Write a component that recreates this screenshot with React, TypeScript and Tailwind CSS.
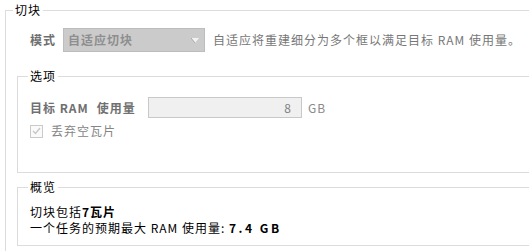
export default function App() {
  return (
    <div className="w-[529px] h-[251px] overflow-hidden bg-white pt-[2px] text-[12px] leading-[16px] tracking-[1px] font-['Noto_Sans_CJK_SC',sans-serif] text-black">
      <fieldset className="ml-[5px] w-[620px] border border-[#dcdcdc] p-0 pb-[40px]">
        <legend className="ml-[7px] px-[2px]">切块</legend>

        {/* mode row */}
        <div className="flex items-center pt-[10px] pl-[24px]">
          <span className="font-bold text-[#6f6f6f]">模式</span>
          <div className="ml-[7px] flex h-[24px] w-[142px] items-center justify-between border border-[#bdbdbd] bg-[#cbcbcb] pl-[4px] pr-[5px]">
            <span className="font-bold text-[#8e8e8e]">自适应切块</span>
            <svg width="8" height="5" viewBox="0 0 8 5">
              <path d="M0 0 L8 0 L4 5 Z" fill="#f2f2f2" />
              <path d="M0 0 L4 5" stroke="#a8a8a8" strokeWidth="1" />
            </svg>
          </div>
          <span className="ml-[8px] text-[#777777]">自适应将重建细分为多个框以满足目标 RAM 使用量。</span>
        </div>

        {/* options group */}
        <div className="mt-[16px] pl-[11px]">
          <fieldset className="border border-[#dcdcdc] p-0">
            <legend className="ml-[10px] px-[2px]">选项</legend>
            <div className="pt-[13px] pb-[34px] pl-[12px]">
              <div className="flex h-[21px] items-center">
                <span className="w-[118px] font-bold text-[#707070]">
                  目标 RAM<span className="ml-[8px]">使用量</span>
                </span>
                <div className="flex h-[21px] w-[154px] items-center justify-end border border-[#c8c8c8] bg-[#f0f0f0] pr-[9px] text-[#808080]">
                  8
                </div>
                <span className="ml-[6px] text-[#8a8a8a]">GB</span>
              </div>
              <div className="mt-[6px] flex h-[14px] items-center">
                <div className="flex h-[13px] w-[13px] items-center justify-center border border-[#cacaca] bg-[#fafafa]">
                  <svg width="9" height="8" viewBox="0 0 9 8">
                    <path d="M1 4 L3.5 6.5 L8 1" fill="none" stroke="#c6c6c6" strokeWidth="1.3" />
                  </svg>
                </div>
                <span className="ml-[8px] text-[#858585]">丢弃空瓦片</span>
              </div>
            </div>
          </fieldset>
        </div>

        {/* overview group */}
        <div className="mt-[6px] pl-[11px]">
          <fieldset className="border border-[#dcdcdc] p-0">
            <legend className="ml-[10px] px-[2px]">概览</legend>
            <div className="pt-[9px] pb-[9px] pl-[12px] leading-[16px]">
              <div>
                切块包括<span className="font-bold">7瓦片</span>
              </div>
              <div>
                一个任务的预期最大 RAM 使用量: <span className="font-bold tracking-[2.5px]">7.4 GB</span>
              </div>
            </div>
          </fieldset>
        </div>
      </fieldset>
    </div>
  );
}
